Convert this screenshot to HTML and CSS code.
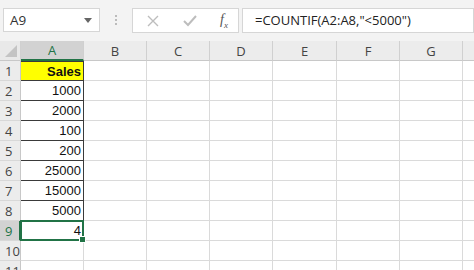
FILE: index.html
```html
<!DOCTYPE html>
<html lang="en">
  <head>
    <meta charset="UTF-8" />
    <meta name="viewport" content="width=device-width, initial-scale=1.0" />
    <title>COUNTIF</title>
    <link rel="stylesheet" href="styles.css">
  </head>
  <body>
    <div class="toolbar">
      <div class="name-box">
        <span>A9</span>
        <svg class="caret" width="8" height="5" viewBox="0 0 8 5"><path d="M0 0h8L4 5z" fill="#666"/></svg>
      </div>
      <div class="sep"><i></i><i></i><i></i></div>
      <div class="fx-box">
        <svg width="14" height="14" viewBox="0 0 14 14"><path d="M2 2l10 10M12 2L2 12" stroke="#bdbdbd" stroke-width="1.4" fill="none"/></svg>
        <svg width="16" height="14" viewBox="0 0 16 14"><path d="M2 7l4 4 8-9" stroke="#bdbdbd" stroke-width="2" fill="none"/></svg>
        <span class="fx">f<sub>x</sub></span>
      </div>
      <div class="formula">=COUNTIF(A2:A8,"&lt;5000")</div>
    </div>

    <div class="sheet">
      <div class="corner"><span class="tri"></span></div>
      <div class="ch sel-col">A</div>
      <div class="ch">B</div>
      <div class="ch">C</div>
      <div class="ch">D</div>
      <div class="ch">E</div>
      <div class="ch">F</div>
      <div class="ch">G</div>
      <div class="ch last"></div>

      <div class="rh">1</div><div class="c bx hd">Sales</div><div class="c"></div><div class="c"></div><div class="c"></div><div class="c"></div><div class="c"></div><div class="c"></div><div class="c last"></div>
      <div class="rh">2</div><div class="c bx">1000</div><div class="c"></div><div class="c"></div><div class="c"></div><div class="c"></div><div class="c"></div><div class="c"></div><div class="c last"></div>
      <div class="rh">3</div><div class="c bx">2000</div><div class="c"></div><div class="c"></div><div class="c"></div><div class="c"></div><div class="c"></div><div class="c"></div><div class="c last"></div>
      <div class="rh">4</div><div class="c bx">100</div><div class="c"></div><div class="c"></div><div class="c"></div><div class="c"></div><div class="c"></div><div class="c"></div><div class="c last"></div>
      <div class="rh">5</div><div class="c bx">200</div><div class="c"></div><div class="c"></div><div class="c"></div><div class="c"></div><div class="c"></div><div class="c"></div><div class="c last"></div>
      <div class="rh">6</div><div class="c bx">25000</div><div class="c"></div><div class="c"></div><div class="c"></div><div class="c"></div><div class="c"></div><div class="c"></div><div class="c last"></div>
      <div class="rh">7</div><div class="c bx">15000</div><div class="c"></div><div class="c"></div><div class="c"></div><div class="c"></div><div class="c"></div><div class="c"></div><div class="c last"></div>
      <div class="rh">8</div><div class="c bx">5000</div><div class="c"></div><div class="c"></div><div class="c"></div><div class="c"></div><div class="c"></div><div class="c"></div><div class="c last"></div>
      <div class="rh sel-row">9</div><div class="c active">4<span class="handle"></span></div><div class="c"></div><div class="c"></div><div class="c"></div><div class="c"></div><div class="c"></div><div class="c"></div><div class="c last"></div>
      <div class="rh">10</div><div class="c"></div><div class="c"></div><div class="c"></div><div class="c"></div><div class="c"></div><div class="c"></div><div class="c"></div><div class="c last"></div>
      <div class="rh">11</div><div class="c"></div><div class="c"></div><div class="c"></div><div class="c"></div><div class="c"></div><div class="c"></div><div class="c"></div><div class="c last"></div>
    </div>
  </body>
</html>
```

FILE: styles.css
```css
/* page */
body {
  margin: 0;
  width: 474px;
  height: 270px;
  overflow: hidden;
  background: #fff;
  font-family: "Liberation Sans", Arial, sans-serif;
}

/* name box + formula bar */
.toolbar {
  display: flex;
  align-items: flex-start;
  height: 41px;
  padding: 8px 0 0 3px;
  box-sizing: border-box;
  background: #f3f3f3;
}

.name-box {
  display: flex;
  align-items: center;
  justify-content: space-between;
  width: 97px;
  height: 24px;
  padding: 0 7px 0 6px;
  box-sizing: border-box;
  background: #fff;
  border: 1px solid #d6d6d6;
  font-family: "Open Sans", sans-serif;
  font-size: 13.5px;
  color: #333;
}

.sep {
  display: flex;
  flex-direction: column;
  align-items: center;
  justify-content: center;
  gap: 2px;
  width: 32px;
  height: 24px;
}

.sep i {
  width: 2px;
  height: 2px;
  background: #bbb;
}

.fx-box {
  display: flex;
  align-items: center;
  justify-content: space-between;
  width: 107px;
  height: 25px;
  padding: 0 10px 0 13px;
  box-sizing: border-box;
  background: #fff;
  border: 1px solid #d6d6d6;
}

.fx {
  font-family: "Liberation Serif", serif;
  font-style: italic;
  font-size: 14px;
  color: #555;
}

.fx sub {
  font-size: 9px;
}

.formula {
  flex: 1;
  height: 25px;
  margin-left: 3px;
  padding-left: 12px;
  box-sizing: border-box;
  background: #fff;
  border: 1px solid #d6d6d6;
  font-family: "Open Sans", sans-serif;
  font-size: 13px;
  line-height: 23px;
  color: #222;
}

/* grid */
.sheet {
  display: grid;
  grid-template-columns: 21px 63px 63px 63px 63px 64px 63px 63px 1fr;
  grid-auto-rows: 20px;
}

.corner {
  position: relative;
  background: #e9e9e9;
  border-right: 1px solid #d0d0d0;
  border-bottom: 1px solid #c8c8c8;
}

.tri {
  position: absolute;
  right: 3px;
  bottom: 3px;
  width: 0;
  height: 0;
  border-left: 12px solid transparent;
  border-bottom: 12px solid #c4c4c4;
}

.ch {
  display: flex;
  align-items: center;
  justify-content: center;
  background: #ececec;
  border-right: 1px solid #d0d0d0;
  border-bottom: 1px solid #c8c8c8;
  font-family: "Open Sans", sans-serif;
  font-size: 13px;
  color: #444;
}

.ch.sel-col {
  background: #d2d2d2;
  border-bottom: 2px solid #217346;
  color: #217346;
}

.rh {
  display: flex;
  align-items: center;
  padding-left: 5px;
  background: #ececec;
  border-right: 1px solid #c8c8c8;
  border-bottom: 1px solid #d8d8d8;
  font-family: "Open Sans", sans-serif;
  font-size: 13px;
  color: #444;
}

.rh.sel-row {
  background: #d2d2d2;
  border-right: 2px solid #217346;
  color: #217346;
}

.c {
  display: flex;
  align-items: center;
  justify-content: flex-end;
  padding-right: 2px;
  border-right: 1px solid #dadada;
  border-bottom: 1px solid #dadada;
  font-size: 13px;
  color: #111;
}

.last {
  border-right: none;
}

/* bordered data range */
.bx {
  border-right-color: #3a3a3a;
  border-bottom-color: #3a3a3a;
}

.hd {
  background: #ffff00;
  font-weight: bold;
  border-top: 1px solid #3a3a3a;
}

.active {
  position: relative;
  border-right-color: #3a3a3a;
}

.active::after {
  content: "";
  position: absolute;
  left: -1px;
  top: -1px;
  right: -1px;
  bottom: -1px;
  border: 2px solid #217346;
}

.handle {
  position: absolute;
  right: -3px;
  bottom: -3px;
  width: 5px;
  height: 5px;
  background: #217346;
  border: 1px solid #fff;
  z-index: 1;
}
```
